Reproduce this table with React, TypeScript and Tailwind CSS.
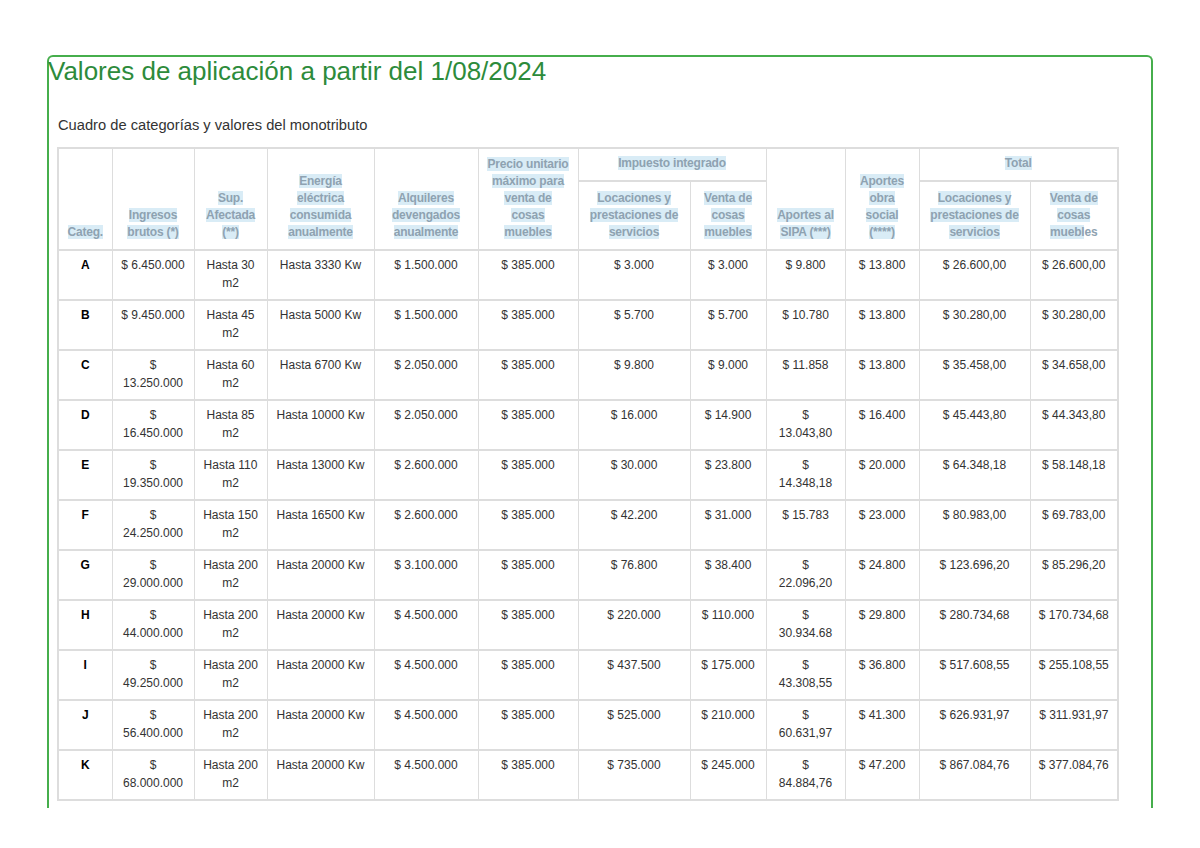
import React from 'react';

// Cuadro de categorías del monotributo
const rows: string[][] = [
  ['A', '$ 6.450.000', 'Hasta 30\nm2', 'Hasta 3330 Kw', '$ 1.500.000', '$ 385.000', '$ 3.000', '$ 3.000', '$ 9.800', '$ 13.800', '$ 26.600,00', '$ 26.600,00'],
  ['B', '$ 9.450.000', 'Hasta 45\nm2', 'Hasta 5000 Kw', '$ 1.500.000', '$ 385.000', '$ 5.700', '$ 5.700', '$ 10.780', '$ 13.800', '$ 30.280,00', '$ 30.280,00'],
  ['C', '$\n13.250.000', 'Hasta 60\nm2', 'Hasta 6700 Kw', '$ 2.050.000', '$ 385.000', '$ 9.800', '$ 9.000', '$ 11.858', '$ 13.800', '$ 35.458,00', '$ 34.658,00'],
  ['D', '$\n16.450.000', 'Hasta 85\nm2', 'Hasta 10000 Kw', '$ 2.050.000', '$ 385.000', '$ 16.000', '$ 14.900', '$\n13.043,80', '$ 16.400', '$ 45.443,80', '$ 44.343,80'],
  ['E', '$\n19.350.000', 'Hasta 110\nm2', 'Hasta 13000 Kw', '$ 2.600.000', '$ 385.000', '$ 30.000', '$ 23.800', '$\n14.348,18', '$ 20.000', '$ 64.348,18', '$ 58.148,18'],
  ['F', '$\n24.250.000', 'Hasta 150\nm2', 'Hasta 16500 Kw', '$ 2.600.000', '$ 385.000', '$ 42.200', '$ 31.000', '$ 15.783', '$ 23.000', '$ 80.983,00', '$ 69.783,00'],
  ['G', '$\n29.000.000', 'Hasta 200\nm2', 'Hasta 20000 Kw', '$ 3.100.000', '$ 385.000', '$ 76.800', '$ 38.400', '$\n22.096,20', '$ 24.800', '$ 123.696,20', '$ 85.296,20'],
  ['H', '$\n44.000.000', 'Hasta 200\nm2', 'Hasta 20000 Kw', '$ 4.500.000', '$ 385.000', '$ 220.000', '$ 110.000', '$\n30.934.68', '$ 29.800', '$ 280.734,68', '$ 170.734,68'],
  ['I', '$\n49.250.000', 'Hasta 200\nm2', 'Hasta 20000 Kw', '$ 4.500.000', '$ 385.000', '$ 437.500', '$ 175.000', '$\n43.308,55', '$ 36.800', '$ 517.608,55', '$ 255.108,55'],
  ['J', '$\n56.400.000', 'Hasta 200\nm2', 'Hasta 20000 Kw', '$ 4.500.000', '$ 385.000', '$ 525.000', '$ 210.000', '$\n60.631,97', '$ 41.300', '$ 626.931,97', '$ 311.931,97'],
  ['K', '$\n68.000.000', 'Hasta 200\nm2', 'Hasta 20000 Kw', '$ 4.500.000', '$ 385.000', '$ 735.000', '$ 245.000', '$\n84.884,76', '$ 47.200', '$ 867.084,76', '$ 377.084,76'],
];

const widths = [54, 82, 73, 107, 104, 100, 112, 76, 79, 74, 111, 88];

// header text, one highlighted span per line
function H({ lines }: { lines: string[] }) {
  return (
    <>
      {lines.map((l, i) => (
        <div key={i} className="whitespace-nowrap">
          <span className="bg-[#d9ecf6]">{l}</span>
        </div>
      ))}
    </>
  );
}

const th = 'border-x border-y-2 border-[#dddddd] px-1 pb-2 pt-[6px] text-center font-bold text-[#8ea2b1] text-[12px] leading-[17px] tracking-[-0.2px]';
const td = 'border-x border-y-2 border-[#dddddd] px-[6px] pt-[5px] align-top text-center text-[12px] leading-[18px]';

export default function App() {
  return (
    <div className="min-h-[848px] bg-white pt-[55px] pl-[47px]" style={{ fontFamily: '"Liberation Sans", Arial, sans-serif' }}>
      <div className="w-[1106px] h-[753px] border-2 border-b-0 border-[#46ae4c] rounded-t-[6px]">
        <h1 className="text-[26px] leading-[30px] text-[#2d8b3b] -ml-[1px] -mt-[1px]">
          Valores de aplicación a partir del 1/08/2024
        </h1>
        <p className="mt-[30px] pl-[9px] text-[14.7px] leading-[18px] text-[#333]">
          Cuadro de categorías y valores del monotributo
        </p>
        <table className="ml-2 mt-[13px] w-[1060px] table-fixed border-collapse border-2 border-[#dddddd]">
          <colgroup>
            {widths.map((w, i) => (
              <col key={i} style={{ width: w }} />
            ))}
          </colgroup>
          <thead>
            <tr className="h-[33px]">
              <th rowSpan={2} className={`${th} align-bottom`}><H lines={['Categ.']} /></th>
              <th rowSpan={2} className={`${th} align-bottom`}><H lines={['Ingresos', 'brutos (*)']} /></th>
              <th rowSpan={2} className={`${th} align-bottom`}><H lines={['Sup.', 'Afectada', '(**)']} /></th>
              <th rowSpan={2} className={`${th} align-bottom`}><H lines={['Energía', 'eléctrica', 'consumida', 'anualmente']} /></th>
              <th rowSpan={2} className={`${th} align-bottom`}><H lines={['Alquileres', 'devengados', 'anualmente']} /></th>
              <th rowSpan={2} className={`${th} align-bottom`}><H lines={['Precio unitario', 'máximo para', 'venta de', 'cosas', 'muebles']} /></th>
              <th colSpan={2} className={`${th} align-middle`}><H lines={['Impuesto integrado']} /></th>
              <th rowSpan={2} className={`${th} align-bottom`}><H lines={['Aportes al', 'SIPA (***)']} /></th>
              <th rowSpan={2} className={`${th} align-bottom`}><H lines={['Aportes', 'obra', 'social', '(****)']} /></th>
              <th colSpan={2} className={`${th} align-middle`}><H lines={['Total']} /></th>
            </tr>
            <tr className="h-[69px]">
              <th className={`${th} align-bottom`}><H lines={['Locaciones y', 'prestaciones de', 'servicios']} /></th>
              <th className={`${th} align-bottom`}><H lines={['Venta de', 'cosas', 'muebles']} /></th>
              <th className={`${th} align-bottom`}><H lines={['Locaciones y', 'prestaciones de', 'servicios']} /></th>
              <th className={`${th} align-bottom`}>
                <H lines={['Venta de', 'cosas']} />
                <div className="whitespace-nowrap">
                  <span className="bg-[#d9ecf6]">muebl</span>es
                </div>
              </th>
            </tr>
          </thead>
          <tbody>
            {rows.map((r) => (
              <tr key={r[0]} className="h-[50px]">
                {r.map((c, i) => (
                  <td key={i} className={`${td} ${i === 0 ? 'font-bold text-black' : 'text-[#333]'}`}>
                    {c.split('\n').map((l, j) => (
                      <div key={j} className="whitespace-nowrap">{l}</div>
                    ))}
                  </td>
                ))}
              </tr>
            ))}
          </tbody>
        </table>
      </div>
    </div>
  );
}
